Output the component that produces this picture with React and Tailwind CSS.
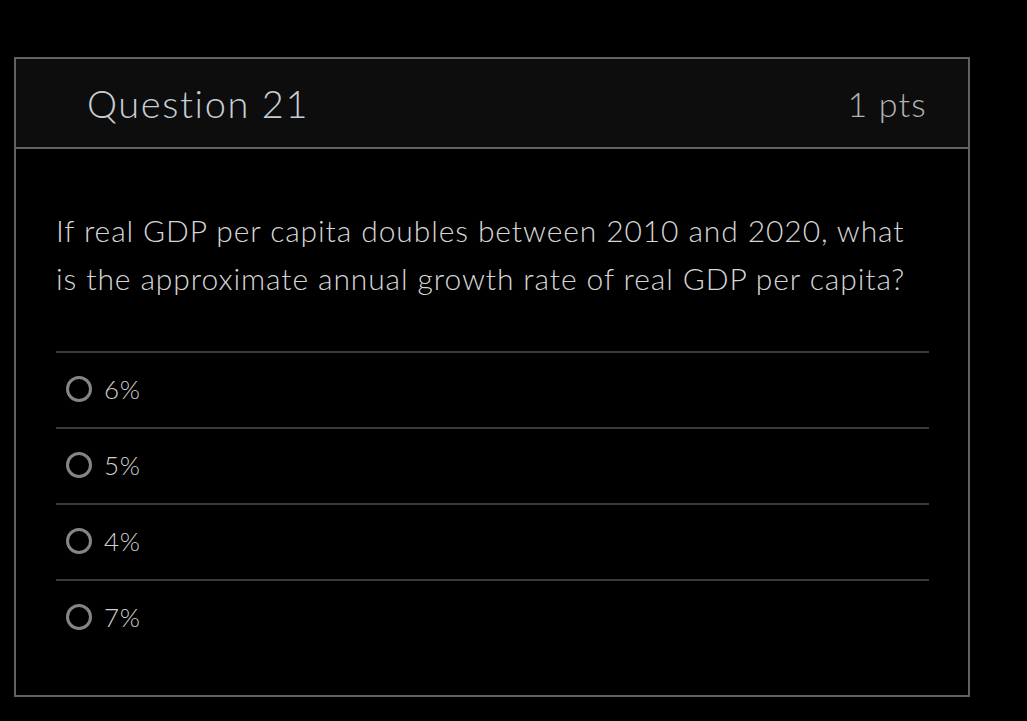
import React from "react";

const options = ["6%", "5%", "4%", "7%"];

const Radio = () => (
  <span className="w-[26px] h-[26px] rounded-full border-[3px] border-[#858585] shrink-0" />
);

export default function App() {
  return (
    <div
      className="min-h-screen bg-black pt-[57px] pl-[14px]"
      style={{ fontFamily: "Lato, 'Open Sans', sans-serif" }}
    >
      <div className="w-[956px] h-[640px] border-2 border-[#626262] flex flex-col">
        {/* Header */}
        <div className="h-[90px] bg-[#0d0d0d] border-b-2 border-[#626262] flex items-center justify-between pl-[71px] pr-[41px] shrink-0">
          <h2 className="text-[38px] font-light text-[#c6ced6] tracking-[1.6px]">Question 21</h2>
          <span className="text-[34px] font-light text-[#b2b2b2] tracking-[1.2px]">1 pts</span>
        </div>

        {/* Body */}
        <div className="pt-[57px] pl-[40px] pr-[39px]">
          <p className="text-[30px] leading-[48px] font-light text-[#d6d6d6] tracking-[0.9px]">
            If real GDP per capita doubles between 2010 and 2020, what is the approximate annual growth rate of real GDP per capita?
          </p>

          <div className="mt-[49px]">
            {options.map((opt) => (
              <div
                key={opt}
                className="h-[76px] border-t-2 border-[#3a3a3a] flex items-center gap-[12px] pl-[10px] pb-[2px]"
              >
                <Radio />
                <span className="text-[26px] font-light text-[#d0d0d0] tracking-[0.7px]">{opt}</span>
              </div>
            ))}
          </div>
        </div>
      </div>
    </div>
  );
}
